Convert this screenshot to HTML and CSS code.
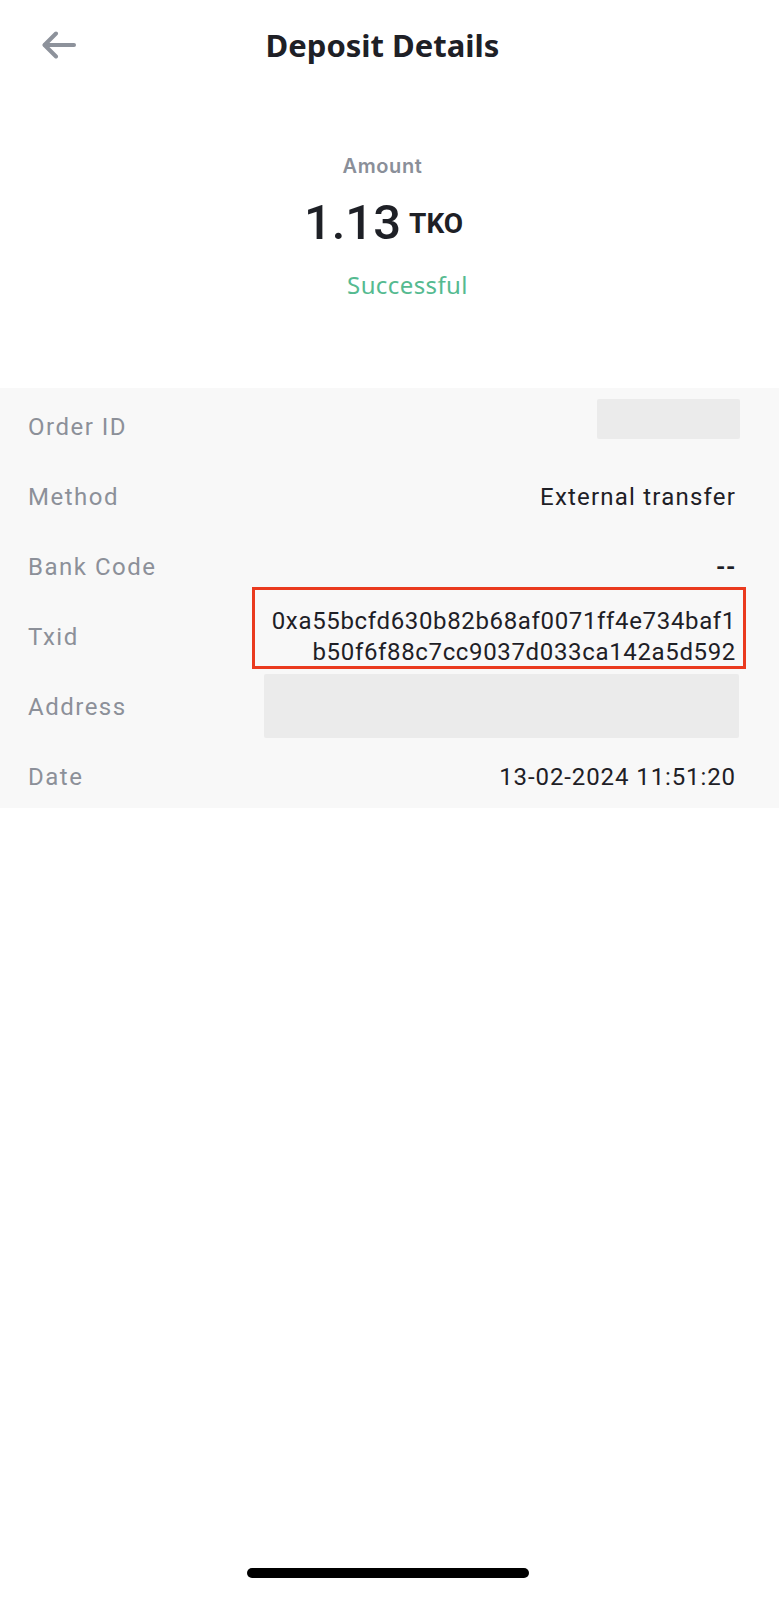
FILE: index.html
```html
<!DOCTYPE html>
<html lang="en">
<head>
<meta charset="utf-8">
<title>Deposit Details</title>
<link rel="stylesheet" href="styles.css">
</head>
<body>
<div class="screen">
  <header class="topbar">
    <div class="back">
      <svg width="34" height="28" viewBox="0 0 34 28" fill="none" stroke="#8d929b" stroke-width="4" stroke-linecap="round" stroke-linejoin="round">
        <path d="M32 14H3"/>
        <path d="M14 2.5L2.5 14L14 25.5"/>
      </svg>
    </div>
    <h1 class="title">Deposit Details</h1>
    <div class="spacer"></div>
  </header>

  <section class="summary">
    <div class="amount-label">Amount</div>
    <div class="amount"><span class="num">1.13</span><span class="unit">TKO</span></div>
    <div class="status">Successful</div>
  </section>

  <section class="details">
    <div class="row">
      <div class="label">Order ID</div>
      <div class="redact redact-sm"></div>
    </div>
    <div class="row">
      <div class="label">Method</div>
      <div class="value">External transfer</div>
    </div>
    <div class="row">
      <div class="label">Bank Code</div>
      <div class="value dash">--</div>
    </div>
    <div class="row">
      <div class="label">Txid</div>
      <div class="value txid">0xa55bcfd630b82b68af0071ff4e734baf1<br>b50f6f88c7cc9037d033ca142a5d592</div>
    </div>
    <div class="row">
      <div class="label">Address</div>
      <div class="redact redact-lg"></div>
    </div>
    <div class="row">
      <div class="label">Date</div>
      <div class="value date">13-02-2024 11:51:20</div>
    </div>
  </section>

  <div class="home-indicator"></div>
</div>
</body>
</html>
```

FILE: styles.css
```css
* { box-sizing: border-box; }
html, body { margin: 0; padding: 0; background: #ffffff; }
body { font-family: Roboto, "Noto Sans", "Liberation Sans", sans-serif; color: #1e2026; }

.screen { width: 779px; height: 1600px; display: flex; flex-direction: column; }

.topbar {
  height: 90px;
  display: grid;
  grid-template-columns: 120px 1fr 120px;
  align-items: center;
}
.back { padding-left: 42px; display: flex; align-items: center; height: 28px; }
.title {
  margin: 0;
  text-align: center;
  font-family: "Noto Sans", Inter, sans-serif;
  font-weight: 700;
  font-size: 31px;
  line-height: 36px;
  color: #1e2026;
  letter-spacing: 0;
  padding-right: 14px;
}

.summary { display: flex; flex-direction: column; align-items: center; padding-top: 64px; }
.amount-label {
  font-family: Inter, "Noto Sans", sans-serif;
  font-weight: 600;
  font-size: 20px;
  line-height: 24px;
  color: #8a8f99;
  letter-spacing: 0.6px;
  padding-right: 14px;
}
.amount {
  margin-top: 18px;
  height: 54px;
  display: flex;
  align-items: baseline;
  padding-right: 12px;
}
.num {
  font-family: Roboto, "Noto Sans", sans-serif;
  font-weight: 500;
  font-size: 49px;
  line-height: 54px;
  color: #1e2026;
}
.unit {
  margin-left: 8px;
  font-family: Roboto, sans-serif;
  font-weight: 700;
  font-size: 28px;
  color: #1e2026;
  position: relative;
  top: -6px;
}
.status {
  margin-top: 22px;
  font-family: "Noto Sans", Inter, sans-serif;
  font-size: 24px;
  line-height: 26px;
  color: #55ba90;
  letter-spacing: 0.4px;
  padding-left: 36px;
}

.details {
  margin-top: 90px;
  background: #f8f8f8;
  padding: 0 43px 0 28px;
}
.row {
  height: 70px;
  display: flex;
  align-items: center;
  justify-content: space-between;
}
.label { font-size: 24px; color: #8c9099; letter-spacing: 1.5px; padding-top: 8px; }
.value { font-size: 24px; color: #1e2026; text-align: right; letter-spacing: 1.2px; padding-top: 8px; }
.date { letter-spacing: 0.9px; }
.dash { font-weight: 700; letter-spacing: 0.5px; }
.txid { line-height: 31px; position: relative; letter-spacing: 0.65px; }
.txid::after {
  content: "";
  position: absolute;
  top: -11px; bottom: -1px; left: -20px; right: -10px;
  border: 3px solid #ea3a1f;
}
.redact { background: #ebebeb; border-radius: 2px; }
.redact-sm { width: 143px; height: 40px; margin-right: -4px; margin-top: -8px; }
.redact-lg { width: 475px; height: 64px; margin-right: -3px; margin-top: 6px; }

.home-indicator {
  margin-top: auto;
  margin-bottom: 22px;
  align-self: center;
  width: 282px;
  height: 10px;
  border-radius: 5px;
  background: #000000;
  position: relative;
  left: -2px;
}
```
